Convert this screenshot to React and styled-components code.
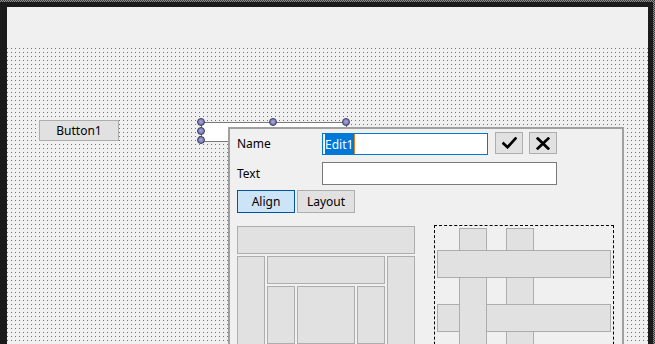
import React from 'react'
import styled, { createGlobalStyle } from 'styled-components'

const GlobalStyle = createGlobalStyle`
  html, body {
    margin: 0;
    padding: 0;
    height: 344px;
    overflow: hidden;
  }
  body {
    background: repeating-conic-gradient(#8c8c8c 0 25%, #3c3c3c 0 50%) 0 0 / 2px 2px;
    font-family: 'Noto Sans', 'Liberation Sans', sans-serif;
    font-size: 12px;
    color: #000;
  }
`

const Frame = styled.div`
  box-sizing: border-box;
  height: 342px;
  margin: 2px 2px 0 0;
  padding: 5px 5px 0 7px;
  background: #1b1b1b;
`

const Client = styled.div`
  display: flex;
  flex-direction: column;
  height: 100%;
  background: #f0f0f0;
`

const TopArea = styled.div`
  height: 41px;
  flex-shrink: 0;
`

const Surface = styled.div`
  position: relative;
  flex: 1;
  overflow: hidden;
  background-color: #f0f0f0;
  background-image: conic-gradient(at 1px 1px, transparent 75%, #707070 0);
  background-size: 4px 4px;
`

const DesignButton = styled.div`
  position: absolute;
  left: ${(p) => p.x}px;
  top: ${(p) => p.y}px;
  box-sizing: border-box;
  width: 80px;
  height: 21px;
  display: flex;
  align-items: center;
  justify-content: center;
  background: #e1e1e1;
  border: 1px solid #adadad;
`

const DesignEdit = styled.div`
  position: absolute;
  left: ${(p) => p.x}px;
  top: ${(p) => p.y}px;
  box-sizing: border-box;
  width: 146px;
  height: 20px;
  background: #fff;
  border: 1px solid #7a7a7a;
`

const Handle = styled.span`
  position: absolute;
  left: ${(p) => p.x}px;
  top: ${(p) => p.y}px;
  box-sizing: border-box;
  width: 8px;
  height: 8px;
  margin: -4px 0 0 -4px;
  border-radius: 50%;
  background: radial-gradient(circle at 50% 45%, #a9a9e0 0, #7474bf 70%);
  border: 1px solid #3a3a4a;
`

const Popup = styled.div`
  position: absolute;
  left: ${(p) => p.x}px;
  top: ${(p) => p.y}px;
  box-sizing: border-box;
  width: 396px;
  height: 260px;
  padding: 3px 8px 0 7px;
  background: #f0f0f0;
  border: 2px solid #a0a0a0;
  display: flex;
  flex-direction: column;
`

const FieldRow = styled.div`
  display: flex;
  align-items: ${(p) => p.align || 'center'};
  height: ${(p) => p.h}px;
  margin-top: ${(p) => p.mt || 0}px;
`

const Label = styled.span`
  width: 85px;
  flex-shrink: 0;
  align-self: center;
`

const Input = styled.div`
  box-sizing: border-box;
  width: ${(p) => p.w}px;
  height: ${(p) => p.h}px;
  margin-top: ${(p) => p.mt || 0}px;
  padding: 0 1px;
  display: flex;
  align-items: stretch;
  background: #fff;
  border: 1px solid ${(p) => (p.focused ? '#0078d7' : '#7a7a7a')};
`

const Selection = styled.span`
  display: flex;
  align-items: center;
  margin-left: 1px;
  padding: 0 1px 0 0;
  background: #0078d7;
  color: #fff;
`

const Caret = styled.span`
  width: 1px;
  background: #e2861c;
`

const IconButton = styled.div`
  box-sizing: border-box;
  width: 28px;
  height: 22px;
  margin-left: ${(p) => p.ml}px;
  display: flex;
  align-items: center;
  justify-content: center;
  background: #e1e1e1;
  border: 1px solid #adadad;
`

const TabRow = styled.div`
  display: flex;
  gap: 2px;
  margin-top: 5px;
`

const Tab = styled.div`
  box-sizing: border-box;
  width: ${(p) => p.w}px;
  height: 23px;
  display: flex;
  align-items: center;
  justify-content: center;
  background: ${(p) => (p.active ? '#cce4f7' : '#e1e1e1')};
  border: 1px solid ${(p) => (p.active ? '#005499' : '#adadad')};
`

const Demos = styled.div`
  display: flex;
  align-items: flex-start;
  gap: 19px;
  margin-top: 12px;
`

const AlignDemo = styled.div`
  display: flex;
  flex-direction: column;
  gap: 2px;
  width: 178px;
  margin-top: 1px;
`

const DemoRow = styled.div`
  display: flex;
  gap: 2px;
`

const DemoColumn = styled.div`
  display: flex;
  flex-direction: column;
  gap: 2px;
  width: ${(p) => p.w}px;
`

const Block = styled.div`
  box-sizing: border-box;
  flex-shrink: 0;
  width: ${(p) => (p.w ? `${p.w}px` : 'auto')};
  height: ${(p) => p.h}px;
  background: #e1e1e1;
  border: 1px solid #adadad;
`

const LayoutDemo = styled.div`
  position: relative;
  box-sizing: border-box;
  width: 180px;
  height: 140px;
  border: 1px dashed #000;
`

const Bar = styled.div`
  position: absolute;
  left: ${(p) => p.x}px;
  top: ${(p) => p.y}px;
  z-index: ${(p) => p.z};
  box-sizing: border-box;
  width: ${(p) => p.w}px;
  height: ${(p) => p.h}px;
  background: #e1e1e1;
  border: 1px solid #adadad;
`

const CheckIcon = () => (
  <svg width="15" height="12" viewBox="0 0 15 12">
    <path d="M1.5 6.5 L5.5 10.2 L13.5 1.5" fill="none" stroke="#000" strokeWidth="2.7" strokeLinecap="square" />
  </svg>
)

const CrossIcon = () => (
  <svg width="14" height="13" viewBox="0 0 14 13">
    <path d="M1.8 1.6 L12.2 11.4 M12.2 1.6 L1.8 11.4" fill="none" stroke="#000" strokeWidth="2.7" strokeLinecap="square" />
  </svg>
)

export default function App() {
  return (
    <>
      <GlobalStyle />
      <Frame>
        <Client>
          <TopArea />
          <Surface>
            <DesignButton x={32} y={72}>Button1</DesignButton>

            <DesignEdit x={194} y={74} />
            <Handle x={194} y={74} />
            <Handle x={194} y={83} />
            <Handle x={194} y={92} />
            <Handle x={266} y={74} />
            <Handle x={339} y={74} />

            <Popup x={221} y={79}>
              <FieldRow h={23} align="flex-start">
                <Label>Name</Label>
                <Input w={166} h={22} mt={1} focused>
                  <Selection>Edit1</Selection>
                  <Caret />
                </Input>
                <IconButton ml={7}>
                  <CheckIcon />
                </IconButton>
                <IconButton ml={6}>
                  <CrossIcon />
                </IconButton>
              </FieldRow>

              <FieldRow h={23} mt={7}>
                <Label>Text</Label>
                <Input w={235} h={23} />
              </FieldRow>

              <TabRow>
                <Tab w={58} active>Align</Tab>
                <Tab w={58}>Layout</Tab>
              </TabRow>

              <Demos>
                <AlignDemo>
                  <Block h={28} />
                  <DemoRow>
                    <Block w={28} h={150} />
                    <DemoColumn w={118}>
                      <Block h={28} />
                      <DemoRow>
                        <Block w={28} h={58} />
                        <Block w={58} h={58} />
                        <Block w={28} h={58} />
                      </DemoRow>
                    </DemoColumn>
                    <Block w={28} h={150} />
                  </DemoRow>
                </AlignDemo>

                <LayoutDemo>
                  <Bar x={71} y={2} w={28} h={140} z={1} />
                  <Bar x={2} y={78} w={174} h={28} z={2} />
                  <Bar x={24} y={2} w={28} h={140} z={3} />
                  <Bar x={2} y={24} w={174} h={28} z={4} />
                </LayoutDemo>
              </Demos>
            </Popup>
          </Surface>
        </Client>
      </Frame>
    </>
  )
}
